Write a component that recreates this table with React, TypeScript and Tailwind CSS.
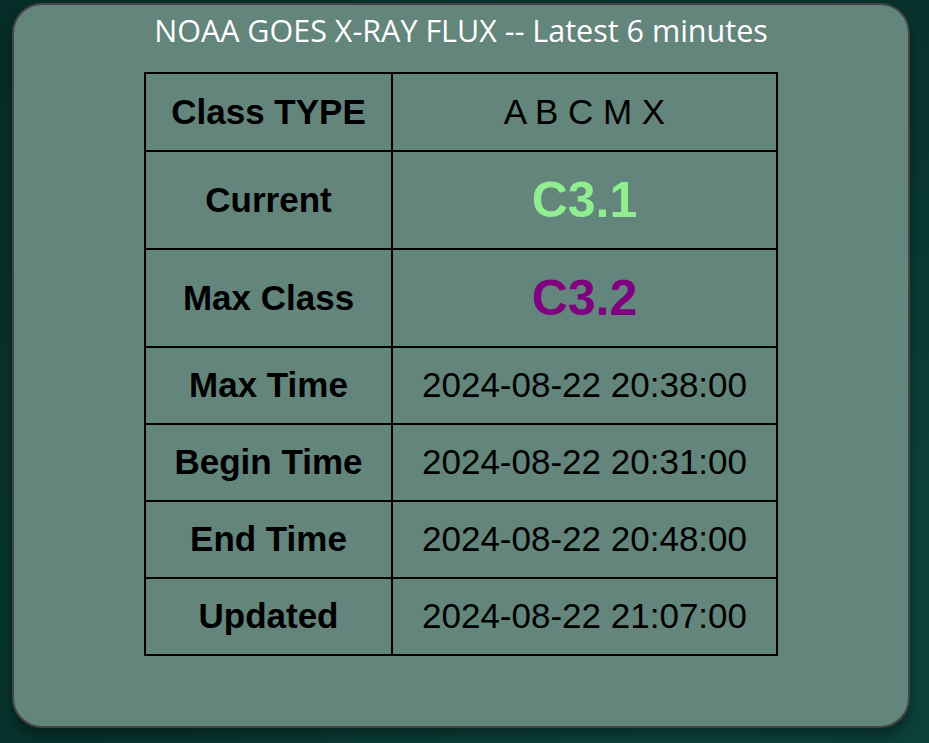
const rows: { label: string; value: string; kind?: 'current' | 'max' }[] = [
  { label: 'Current', value: 'C3.1', kind: 'current' },
  { label: 'Max Class', value: 'C3.2', kind: 'max' },
  { label: 'Max Time', value: '2024-08-22 20:38:00' },
  { label: 'Begin Time', value: '2024-08-22 20:31:00' },
  { label: 'End Time', value: '2024-08-22 20:48:00' },
  { label: 'Updated', value: '2024-08-22 21:07:00' },
]

export default function App() {
  return (
    <div className="w-[929px] h-[743px] overflow-hidden bg-[radial-gradient(ellipse_at_75%_80%,#0f4a42_0%,#083630_55%,#062c27_100%)] pt-[3px] pl-[12px]">
      <div className="w-[898px] h-[725px] rounded-[30px] border-2 border-[#444] bg-[#63857c] shadow-[0_8px_12px_rgba(0,0,0,0.35)] flex flex-col items-center">
        <h1 className="mt-[7px] text-[30.5px] leading-[36px] text-white font-['Open_Sans',sans-serif] font-normal">
          NOAA GOES X-RAY FLUX -- Latest 6 minutes
        </h1>
        <table className="mt-[24px] border-collapse border-2 border-black text-black font-['Liberation_Sans',Arial,sans-serif]">
          <tbody>
            <tr className="h-[78px]">
              <td className="w-[247px] border-2 border-black text-center text-[35px] font-bold">Class TYPE</td>
              <td className="w-[385px] border-2 border-black text-center text-[35px]">A B C M X</td>
            </tr>
            {rows.map(r => (
              <tr key={r.label} className={r.kind ? 'h-[98px]' : 'h-[77px]'}>
                <td className="border-2 border-black text-center text-[35px] font-bold">{r.label}</td>
                <td
                  className={
                    r.kind === 'current'
                      ? 'border-2 border-black text-center text-[50px] font-bold text-[#90ee90]'
                      : r.kind === 'max'
                        ? 'border-2 border-black text-center text-[50px] font-bold text-[#800080]'
                        : 'border-2 border-black text-center text-[35px]'
                  }
                >
                  {r.value}
                </td>
              </tr>
            ))}
          </tbody>
        </table>
      </div>
    </div>
  )
}
